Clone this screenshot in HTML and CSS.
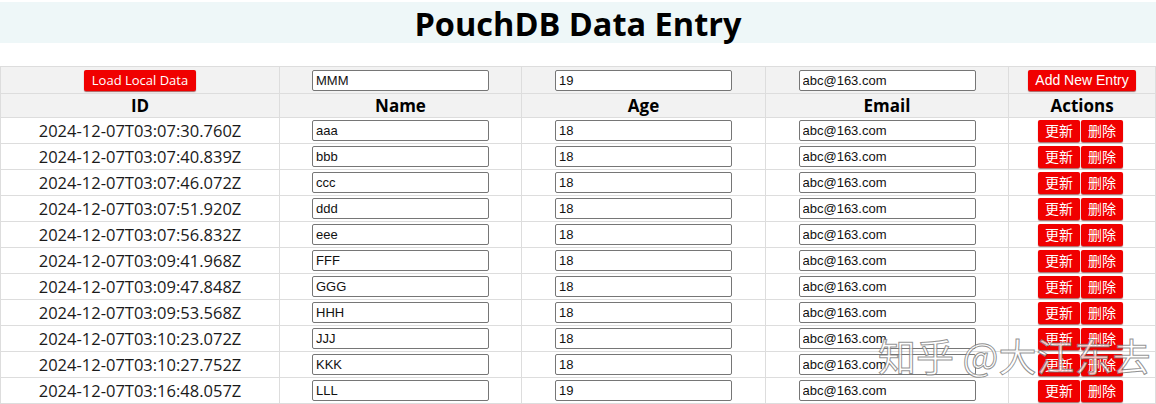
FILE: index.html
```html
<!DOCTYPE html>
<html lang="zh">
<head>
<meta charset="utf-8">
<title>PouchDB Data Entry</title>
<link rel="stylesheet" href="styles.css">
</head>
<body>
<h1 class="title">PouchDB Data Entry</h1>
<table class="grid">
  <colgroup>
    <col class="c-id"><col class="c-name"><col class="c-age"><col class="c-email"><col class="c-act">
  </colgroup>
  <thead>
    <tr class="entry-row">
      <td><button class="btn">Load Local Data</button></td>
      <td><input class="field" value="MMM"></td>
      <td><input class="field" value="19"></td>
      <td><input class="field" value="abc@163.com"></td>
      <td><button class="btn btn-arial">Add New Entry</button></td>
    </tr>
    <tr class="head-row">
      <th>ID</th><th>Name</th><th>Age</th><th>Email</th><th>Actions</th>
    </tr>
  </thead>
  <tbody>
    <tr><td>2024-12-07T03:07:30.760Z</td><td><input class="field" value="aaa"></td><td><input class="field" value="18"></td><td><input class="field" value="abc@163.com"></td><td><span class="acts"><button class="btn btn-act">更新</button><button class="btn btn-act">删除</button></span></td></tr>
    <tr><td>2024-12-07T03:07:40.839Z</td><td><input class="field" value="bbb"></td><td><input class="field" value="18"></td><td><input class="field" value="abc@163.com"></td><td><span class="acts"><button class="btn btn-act">更新</button><button class="btn btn-act">删除</button></span></td></tr>
    <tr><td>2024-12-07T03:07:46.072Z</td><td><input class="field" value="ccc"></td><td><input class="field" value="18"></td><td><input class="field" value="abc@163.com"></td><td><span class="acts"><button class="btn btn-act">更新</button><button class="btn btn-act">删除</button></span></td></tr>
    <tr><td>2024-12-07T03:07:51.920Z</td><td><input class="field" value="ddd"></td><td><input class="field" value="18"></td><td><input class="field" value="abc@163.com"></td><td><span class="acts"><button class="btn btn-act">更新</button><button class="btn btn-act">删除</button></span></td></tr>
    <tr><td>2024-12-07T03:07:56.832Z</td><td><input class="field" value="eee"></td><td><input class="field" value="18"></td><td><input class="field" value="abc@163.com"></td><td><span class="acts"><button class="btn btn-act">更新</button><button class="btn btn-act">删除</button></span></td></tr>
    <tr><td>2024-12-07T03:09:41.968Z</td><td><input class="field" value="FFF"></td><td><input class="field" value="18"></td><td><input class="field" value="abc@163.com"></td><td><span class="acts"><button class="btn btn-act">更新</button><button class="btn btn-act">删除</button></span></td></tr>
    <tr><td>2024-12-07T03:09:47.848Z</td><td><input class="field" value="GGG"></td><td><input class="field" value="18"></td><td><input class="field" value="abc@163.com"></td><td><span class="acts"><button class="btn btn-act">更新</button><button class="btn btn-act">删除</button></span></td></tr>
    <tr><td>2024-12-07T03:09:53.568Z</td><td><input class="field" value="HHH"></td><td><input class="field" value="18"></td><td><input class="field" value="abc@163.com"></td><td><span class="acts"><button class="btn btn-act">更新</button><button class="btn btn-act">删除</button></span></td></tr>
    <tr><td>2024-12-07T03:10:23.072Z</td><td><input class="field" value="JJJ"></td><td><input class="field" value="18"></td><td><input class="field" value="abc@163.com"></td><td><span class="acts"><button class="btn btn-act">更新</button><button class="btn btn-act">删除</button></span></td></tr>
    <tr><td>2024-12-07T03:10:27.752Z</td><td><input class="field" value="KKK"></td><td><input class="field" value="18"></td><td><input class="field" value="abc@163.com"></td><td><span class="acts"><button class="btn btn-act">更新</button><button class="btn btn-act">删除</button></span></td></tr>
    <tr><td>2024-12-07T03:16:48.057Z</td><td><input class="field" value="LLL"></td><td><input class="field" value="19"></td><td><input class="field" value="abc@163.com"></td><td><span class="acts"><button class="btn btn-act">更新</button><button class="btn btn-act">删除</button></span></td></tr>
  </tbody>
</table>
<div class="watermark">知乎 @大江东去</div>
</body>
</html>
```
FILE: styles.css
```css
html, body {
  margin: 0;
  padding: 0;
  background: #fff;
}
body {
  font-family: "Open Sans", "Noto Sans", "Noto Sans CJK SC", sans-serif;
  color: #111;
  position: relative;
  width: 1156px;
  height: 404px;
  overflow: hidden;
}
.title {
  margin: 2px 0 0;
  height: 41px;
  background: #eef7f8;
  text-align: center;
  font-family: "Open Sans", sans-serif;
  font-weight: 700;
  font-size: 32.5px;
  line-height: 43px;
  color: #000;
}
.grid {
  margin-top: 23px;
  border-collapse: collapse;
  table-layout: fixed;
  width: 1155px;
}
.c-id { width: 279px; }
.c-name { width: 242px; }
.c-age { width: 244px; }
.c-email { width: 243px; }
.c-act { width: 147px; }
.grid td, .grid th {
  border: 1px solid #dddddd;
  padding: 0;
  text-align: center;
  vertical-align: middle;
  line-height: 18px;
}
.grid td {
  height: 25px;
  font-size: 16.5px;
  color: #1a1a1a;
}
.entry-row td {
  background: #f2f2f2;
  height: 26px;
}
.head-row th {
  background: #f2f2f2;
  height: 23px;
  font-size: 17px;
  font-weight: 700;
  color: #000;
}
.field {
  box-sizing: border-box;
  width: 177px;
  height: 21px;
  margin: 0;
  padding: 0 3px;
  border: 1px solid #767676;
  border-radius: 2px;
  background: #fff;
  font-family: "Liberation Sans", "Noto Sans CJK SC", sans-serif;
  font-size: 13px;
  color: #111;
  vertical-align: middle;
  display: inline-block;
}
.btn {
  box-sizing: border-box;
  height: 21px;
  margin: 0;
  padding: 0 8px;
  border: none;
  border-radius: 2px;
  background: #f00000;
  color: #fff;
  font-family: "Open Sans", "Noto Sans CJK SC", sans-serif;
  font-size: 13px;
  line-height: 21px;
  box-shadow: 0 1px 1px rgba(120, 0, 0, 0.6);
  vertical-align: middle;
}
.btn-arial {
  font-family: "Liberation Sans", sans-serif;
  font-size: 14px;
  padding: 0 7px;
}
.acts {
  display: inline-flex;
  gap: 1px;
  vertical-align: middle;
  margin-left: -3px;
}
.btn-act {
  width: 42px;
  height: 22px;
  padding: 0;
  font-family: "Liberation Sans", "Noto Sans CJK SC", sans-serif;
  font-size: 14px;
  line-height: 22px;
}
.watermark {
  position: absolute;
  left: 878px;
  top: 330px;
  white-space: nowrap;
  font-family: "Noto Sans CJK SC", sans-serif;
  font-size: 38px;
  line-height: 50px;
  color: rgba(255, 255, 255, 0.75);
  -webkit-text-stroke: 1px rgba(110, 110, 110, 0.75);
  pointer-events: none;
}
```
